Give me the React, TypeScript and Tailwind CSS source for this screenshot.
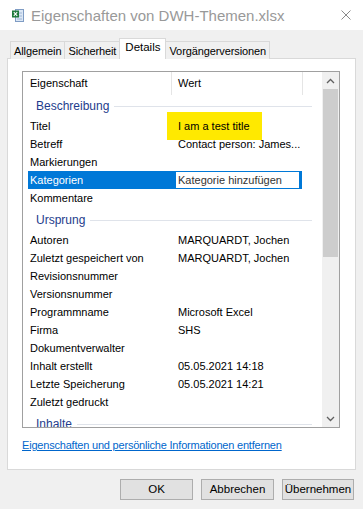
import React from 'react';

type Row = { label: string; value?: string };

const groups: { title: string; rows: Row[] }[] = [
  {
    title: 'Beschreibung',
    rows: [
      { label: 'Titel', value: 'I am a test title' },
      { label: 'Betreff', value: 'Contact person: James...' },
      { label: 'Markierungen' },
      { label: 'Kategorien' },
      { label: 'Kommentare' },
    ],
  },
  {
    title: 'Ursprung',
    rows: [
      { label: 'Autoren', value: 'MARQUARDT, Jochen' },
      { label: 'Zuletzt gespeichert von', value: 'MARQUARDT, Jochen' },
      { label: 'Revisionsnummer' },
      { label: 'Versionsnummer' },
      { label: 'Programmname', value: 'Microsoft Excel' },
      { label: 'Firma', value: 'SHS' },
      { label: 'Dokumentverwalter' },
      { label: 'Inhalt erstellt', value: '05.05.2021 14:18' },
      { label: 'Letzte Speicherung', value: '05.05.2021 14:21' },
      { label: 'Zuletzt gedruckt' },
    ],
  },
  { title: 'Inhalte', rows: [] },
];

const tabs = ['Allgemein', 'Sicherheit', 'Details', 'Vorgängerversionen'];

const ExcelIcon = () => (
  <svg width="12" height="13" viewBox="0 0 12 13">
    <rect x="3.5" y="0.5" width="8" height="12" fill="#dbe7f5" stroke="#7f9cc4" />
    <line x1="5" y1="4" x2="10" y2="4" stroke="#9fb6d6" />
    <line x1="5" y1="7" x2="10" y2="7" stroke="#9fb6d6" />
    <line x1="5" y1="10" x2="10" y2="10" stroke="#9fb6d6" />
    <rect x="0" y="1.5" width="7" height="7" fill="#1f7a3c" />
    <path d="M1.8 3.2 L5.2 6.8 M5.2 3.2 L1.8 6.8" stroke="#fff" strokeWidth="1.1" />
  </svg>
);

const Chevron = ({ up }: { up?: boolean }) => (
  <svg width="9" height="6" viewBox="0 0 9 6">
    <path d={up ? 'M1 5 L4.5 1.5 L8 5' : 'M1 1 L4.5 4.5 L8 1'} fill="none" stroke="#606060" strokeWidth="1.3" />
  </svg>
);

const GroupHeader = ({ title, first }: { title: string; first?: boolean }) => (
  <div className={`flex h-[22px] items-center pl-[13px] ${first ? '' : 'mt-[2px]'}`}>
    <span className="text-[12px] text-[#1e3c8c]">{title}</span>
    <div className="ml-[5px] mr-[10px] h-px flex-1 bg-[#dfe3ea]" />
  </div>
);

const DataRow = ({ row }: { row: Row }) => {
  if (row.label === 'Kategorien') {
    return (
      <div className="ml-[5px] flex h-[18px] w-[274px] items-center bg-[#0078d7] text-white">
        <span className="w-[148px] shrink-0 pl-[2px]">{row.label}</span>
        <div className="flex h-[16px] w-[123px] items-center bg-white pl-[2px] text-[#333]">Kategorie hinzufügen</div>
      </div>
    );
  }
  return (
    <div className="flex h-[18px] items-center pl-[7px] text-black">
      <span className="w-[148px] shrink-0">{row.label}</span>
      <span className="relative">
        {row.label === 'Titel' && (
          <span className="absolute left-[-11px] top-[-9px] h-[28px] w-[95px] bg-[#ffe900]" />
        )}
        <span className="relative">{row.value}</span>
      </span>
    </div>
  );
};

export default function App() {
  return (
    <div
      className="flex h-[509px] w-[363px] flex-col overflow-hidden bg-[#f0f0f0] text-[11px] leading-none"
      style={{ fontFamily: '"Liberation Sans", Arial, sans-serif' }}
    >
      {/* title bar */}
      <div className="flex h-[30px] shrink-0 items-center bg-white pl-[12px] pr-[12px]">
        <ExcelIcon />
        <span className="ml-[7px] text-[15px] text-[#999999]">Eigenschaften von DWH-Themen.xlsx</span>
        <svg className="ml-auto" width="10" height="10" viewBox="0 0 10 10">
          <path d="M0.5 0.5 L9.5 9.5 M9.5 0.5 L0.5 9.5" stroke="#8a8a8a" strokeWidth="1" />
        </svg>
      </div>

      {/* tabs */}
      <div className="relative z-10 mb-[-1px] mt-[8px] flex h-[21px] items-end pl-[10px]">
        {tabs.map((t) => {
          const active = t === 'Details';
          return (
            <div
              key={t}
              className={
                active
                  ? 'ml-[-1px] flex h-[21px] items-center border border-b-0 border-[#d9d9d9] bg-white px-[5px] pb-[2px] text-[11.5px] text-black'
                  : 'ml-[-1px] flex h-[18px] items-center border border-b-0 border-[#d9d9d9] bg-[#f0f0f0] px-[3px] pt-[1px] text-[11px] tracking-[-0.1px] text-black first:ml-0'
              }
            >
              {t}
            </div>
          );
        })}
      </div>

      {/* panel */}
      <div className="mx-[7px] flex h-[412px] flex-col border border-[#d9d9d9] bg-white pl-[14px] pt-[12px]">
        <div className="flex h-[357px] w-[318px] border border-[#a0a0a0]">
          <div className="flex-1 overflow-hidden">
            <div className="flex h-[23px] items-center text-black">
              <span className="w-[148px] pl-[7px]">Eigenschaft</span>
              <div className="h-full w-px bg-[#e5e5e5]" />
              <span className="w-[130px] pl-[6px]">Wert</span>
              <div className="h-full w-px bg-[#e5e5e5]" />
            </div>
            {groups.map((g, i) => (
              <div key={g.title}>
                <GroupHeader title={g.title} first={i === 0} />
                {g.rows.map((r) => (
                  <DataRow key={r.label} row={r} />
                ))}
              </div>
            ))}
          </div>
          {/* scrollbar */}
          <div className="flex w-[17px] shrink-0 flex-col bg-[#f0f0f0]">
            <div className="flex h-[17px] items-center justify-center">
              <Chevron up />
            </div>
            <div className="mx-px h-[168px] bg-[#cdcdcd]" />
            <div className="flex-1" />
            <div className="flex h-[17px] items-center justify-center">
              <Chevron />
            </div>
          </div>
        </div>
        <div className="mt-[12px] text-[11px] tracking-[-0.2px] text-[#0066cc] underline">
          Eigenschaften und persönliche Informationen entfernen
        </div>
      </div>

      {/* buttons */}
      <div className="mt-[9px] flex justify-end gap-[8px] pr-[9px] text-[11.5px] text-black">
        <button className="h-[21px] w-[73px] border border-[#adadad] bg-[#e1e1e1]">OK</button>
        <button className="h-[21px] w-[73px] border border-[#adadad] bg-[#e1e1e1]">Abbrechen</button>
        <button className="h-[21px] w-[72px] border border-[#adadad] bg-[#e1e1e1]">Übernehmen</button>
      </div>
    </div>
  );
}
